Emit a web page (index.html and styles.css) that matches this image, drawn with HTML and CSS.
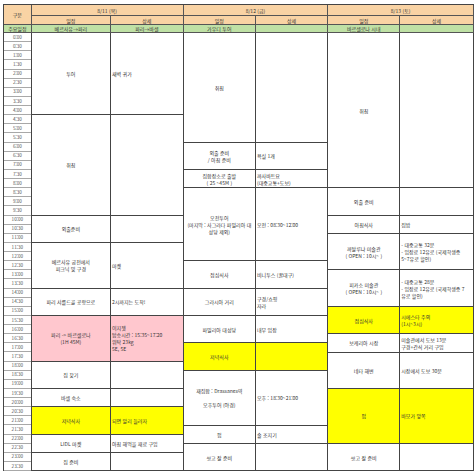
FILE: index.html
```html
<!DOCTYPE html>
<html lang="ko">
<head>
<meta charset="utf-8">
<link rel="stylesheet" href="styles.css">
</head>
<body>
<div class="sheet">
  <div class="hdr">
    <div class="cell tan span2">구분</div>
    <div class="cell tan dspan">8/11 (목)</div>
    <div class="cell tan dspan">8/12 (금)</div>
    <div class="cell tan dspan">8/13 (토)</div>
    <div class="cell tan">일정</div>
    <div class="cell tan">상세</div>
    <div class="cell tan">일정</div>
    <div class="cell tan">상세</div>
    <div class="cell tan">일정</div>
    <div class="cell tan">상세</div>
    <div class="cell green">주요일정</div>
    <div class="cell green">베르사유→파리</div>
    <div class="cell green">파리→바셀</div>
    <div class="cell green">가우디 투어</div>
    <div class="cell green"></div>
    <div class="cell green">바르셀로나 시내</div>
    <div class="cell green"></div>
  </div>
  <div class="body">
    <div class="col w1 times">
      <div class="t">0:00</div><div class="t">0:30</div><div class="t">1:00</div><div class="t">1:30</div>
      <div class="t">2:00</div><div class="t">2:30</div><div class="t">3:00</div><div class="t">3:30</div>
      <div class="t">4:00</div><div class="t">4:30</div><div class="t">5:00</div><div class="t">5:30</div>
      <div class="t">6:00</div><div class="t">6:30</div><div class="t">7:00</div><div class="t">7:30</div>
      <div class="t">8:00</div><div class="t">8:30</div><div class="t">9:00</div><div class="t">9:30</div>
      <div class="t">10:00</div><div class="t">10:30</div><div class="t">11:00</div><div class="t">11:30</div>
      <div class="t">12:00</div><div class="t">12:30</div><div class="t">13:00</div><div class="t">13:30</div>
      <div class="t">14:00</div><div class="t">14:30</div><div class="t">15:00</div><div class="t">15:30</div>
      <div class="t">16:00</div><div class="t">16:30</div><div class="t">17:00</div><div class="t">17:30</div>
      <div class="t">18:00</div><div class="t">18:30</div><div class="t">19:00</div><div class="t">19:30</div>
      <div class="t">20:00</div><div class="t">20:30</div><div class="t">21:00</div><div class="t">21:30</div>
      <div class="t">22:00</div><div class="t">22:30</div><div class="t">23:00</div><div class="t">23:30</div>
    </div>

    <div class="col w2">
      <div class="b ctr h9">투어</div>
      <div class="b ctr h11">취침</div>
      <div class="b ctr h3">외출준비</div>
      <div class="b ctr h5">베르사유 궁전에서<br>피크닉 및 구경</div>
      <div class="b ctr h3">파리 샤를드골 공항으로</div>
      <div class="b ctr h5 pink">파리 -&gt; 바르셀로나<br>(1H 45M)</div>
      <div class="b ctr h3">짐 찾기</div>
      <div class="b ctr h2">바셀 숙소</div>
      <div class="b ctr h3 yellow">저녁식사</div>
      <div class="b ctr h2">LIDL 마켓</div>
      <div class="b ctr h2">짐 준비</div>
    </div>

    <div class="col w3">
      <div class="b lft h9">새벽 귀가</div>
      <div class="b lft h11"></div>
      <div class="b lft h3"></div>
      <div class="b lft h5">마켓</div>
      <div class="b lft h3">2시까지는 도착!</div>
      <div class="b lft h5 pink">이지젯<br>탑승시간 : 15:35~17:20<br>위탁 23kg<br>5E, 5E</div>
      <div class="b lft h3"></div>
      <div class="b lft h2"></div>
      <div class="b lft h3 yellow">되면 알리 들러자</div>
      <div class="b lft h2">아침 해먹을 재료 구입</div>
      <div class="b lft h2"></div>
    </div>

    <div class="col w4">
      <div class="b ctr h12">취침</div>
      <div class="b ctr h3">외출 준비<br>/ 아침 준비</div>
      <div class="b ctr h2">집합장소로 출발<br>( 25 ~45M )</div>
      <div class="b ctr h8">오전투어<br>(마지막 : 사그라다 파밀리아 대<br>성당 제외)</div>
      <div class="b ctr h3">점심식사</div>
      <div class="b ctr h3">그라시아 거리</div>
      <div class="b ctr h3">파밀리아 대성당</div>
      <div class="b ctr h3 yellow">저녁식사</div>
      <div class="b ctr h6">재집합 : Drassanes역<br><br>오후투어 (야경)</div>
      <div class="b ctr h2">펍</div>
      <div class="b ctr h3">씻고 잘 준비</div>
    </div>

    <div class="col w5">
      <div class="b lft h12"></div>
      <div class="b lft h3">욕실 1개</div>
      <div class="b lft h2">까사바트요<br>(대중교통+도보)</div>
      <div class="b lft h8">오전 : 08:30~12:00</div>
      <div class="b lft h3">비니투스 (꿀대구)</div>
      <div class="b lft h3">구경/쇼핑<br>자라</div>
      <div class="b lft h3">내부 입장</div>
      <div class="b lft h3 yellow"></div>
      <div class="b lft h6">오후 : 18:30~21:00</div>
      <div class="b lft h2">술 조지기</div>
      <div class="b lft h3"></div>
    </div>

    <div class="col w6">
      <div class="b ctr h17">취침</div>
      <div class="b ctr h3">외출 준비</div>
      <div class="b ctr h2">아침식사</div>
      <div class="b ctr h4">까탈루냐 미술관<br>( OPEN : 10시~ )</div>
      <div class="b ctr h4">피카소 미술관<br>( OPEN : 10시~ )</div>
      <div class="b ctr h3 yellow">점심식사</div>
      <div class="b ctr h2">보케리아 시장</div>
      <div class="b ctr h4">네타 해변</div>
      <div class="b ctr h6 yellow">펍</div>
      <div class="b ctr h3">씻고 잘 준비</div>
    </div>

    <div class="col w7">
      <div class="b lft h17"></div>
      <div class="b lft h3"></div>
      <div class="b lft h2">집밥</div>
      <div class="b lft h4">- 대중교통 32분<br>- 입장료 12유로 (국제학생증<br>5~7유로 할인)</div>
      <div class="b lft h4">- 대중교통 28분<br>- 입장료 12유로 (국제학생증 7<br>유로 할인)</div>
      <div class="b lft h3 yellow">시에스타 주의<br>(1시~3시)</div>
      <div class="b lft h2">미술관에서 도보 13분<br>구경+간식 거리 구입</div>
      <div class="b lft h4">시장에서 도보 30분</div>
      <div class="b lft h6 yellow">바모가 앞쪽</div>
      <div class="b lft h3"></div>
    </div>
  </div>
</div>
</body>
</html>
```

FILE: styles.css
```css
* { box-sizing: border-box; margin: 0; padding: 0; }
html, body { background: #ffffff; }
body {
  font-family: "Noto Sans CJK KR", "Noto Sans", "Liberation Sans", sans-serif;
  font-size: 5px;
  line-height: 7px;
  color: #333333;
  padding: 4px 0 0 3px;
}
.sheet {
  width: 471px;
  border-left: 1px solid #444444;
  border-top: 1px solid #444444;
}
.hdr {
  display: grid;
  grid-template-columns: 27.7px 79.3px 72.7px 72.3px 72.3px 72px 73.7px;
  grid-template-rows: 11px 9px 8.1px;
}
.cell {
  border-right: 1px solid #555555;
  border-bottom: 1px solid #555555;
  display: flex;
  align-items: center;
  justify-content: center;
  white-space: nowrap;
  overflow: hidden;
}
.span2 { grid-row: span 2; }
.dspan { grid-column: span 2; }
.tan { background: #f9d3a4; }
.green { background: #bfe1a5; }

.body { display: flex; }
.col { flex: none; display: flex; flex-direction: column; }
.w1 { width: 27.7px; }
.w2 { width: 79.3px; }
.w3 { width: 72.7px; }
.w4 { width: 72.3px; }
.w5 { width: 72.3px; }
.w6 { width: 72px; }
.w7 { width: 73.7px; }

.times { border-right: 1px solid #444444; }
.t {
  height: 9.13px;
  border-bottom: 1px solid #a8a8a8;
  display: flex;
  align-items: center;
  justify-content: center;
  color: #555555;
  font-size: 4.6px;
}

.b {
  border-right: 1px solid #444444;
  border-bottom: 1px solid #444444;
  display: flex;
  flex-direction: column;
  justify-content: center;
  overflow: hidden;
  white-space: nowrap;
}
.ctr { align-items: center; text-align: center; }
.lft { align-items: flex-start; text-align: left; padding-left: 1px; }
.pink { background: #ffc7ce; }
.yellow { background: #ffff00; }

.h2 { height: 18.26px; }
.h3 { height: 27.39px; }
.h4 { height: 36.52px; }
.h5 { height: 45.65px; }
.h6 { height: 54.78px; }
.h8 { height: 73.04px; }
.h9 { height: 82.17px; }
.h11 { height: 100.43px; }
.h12 { height: 109.56px; }
.h17 { height: 155.21px; }
```
